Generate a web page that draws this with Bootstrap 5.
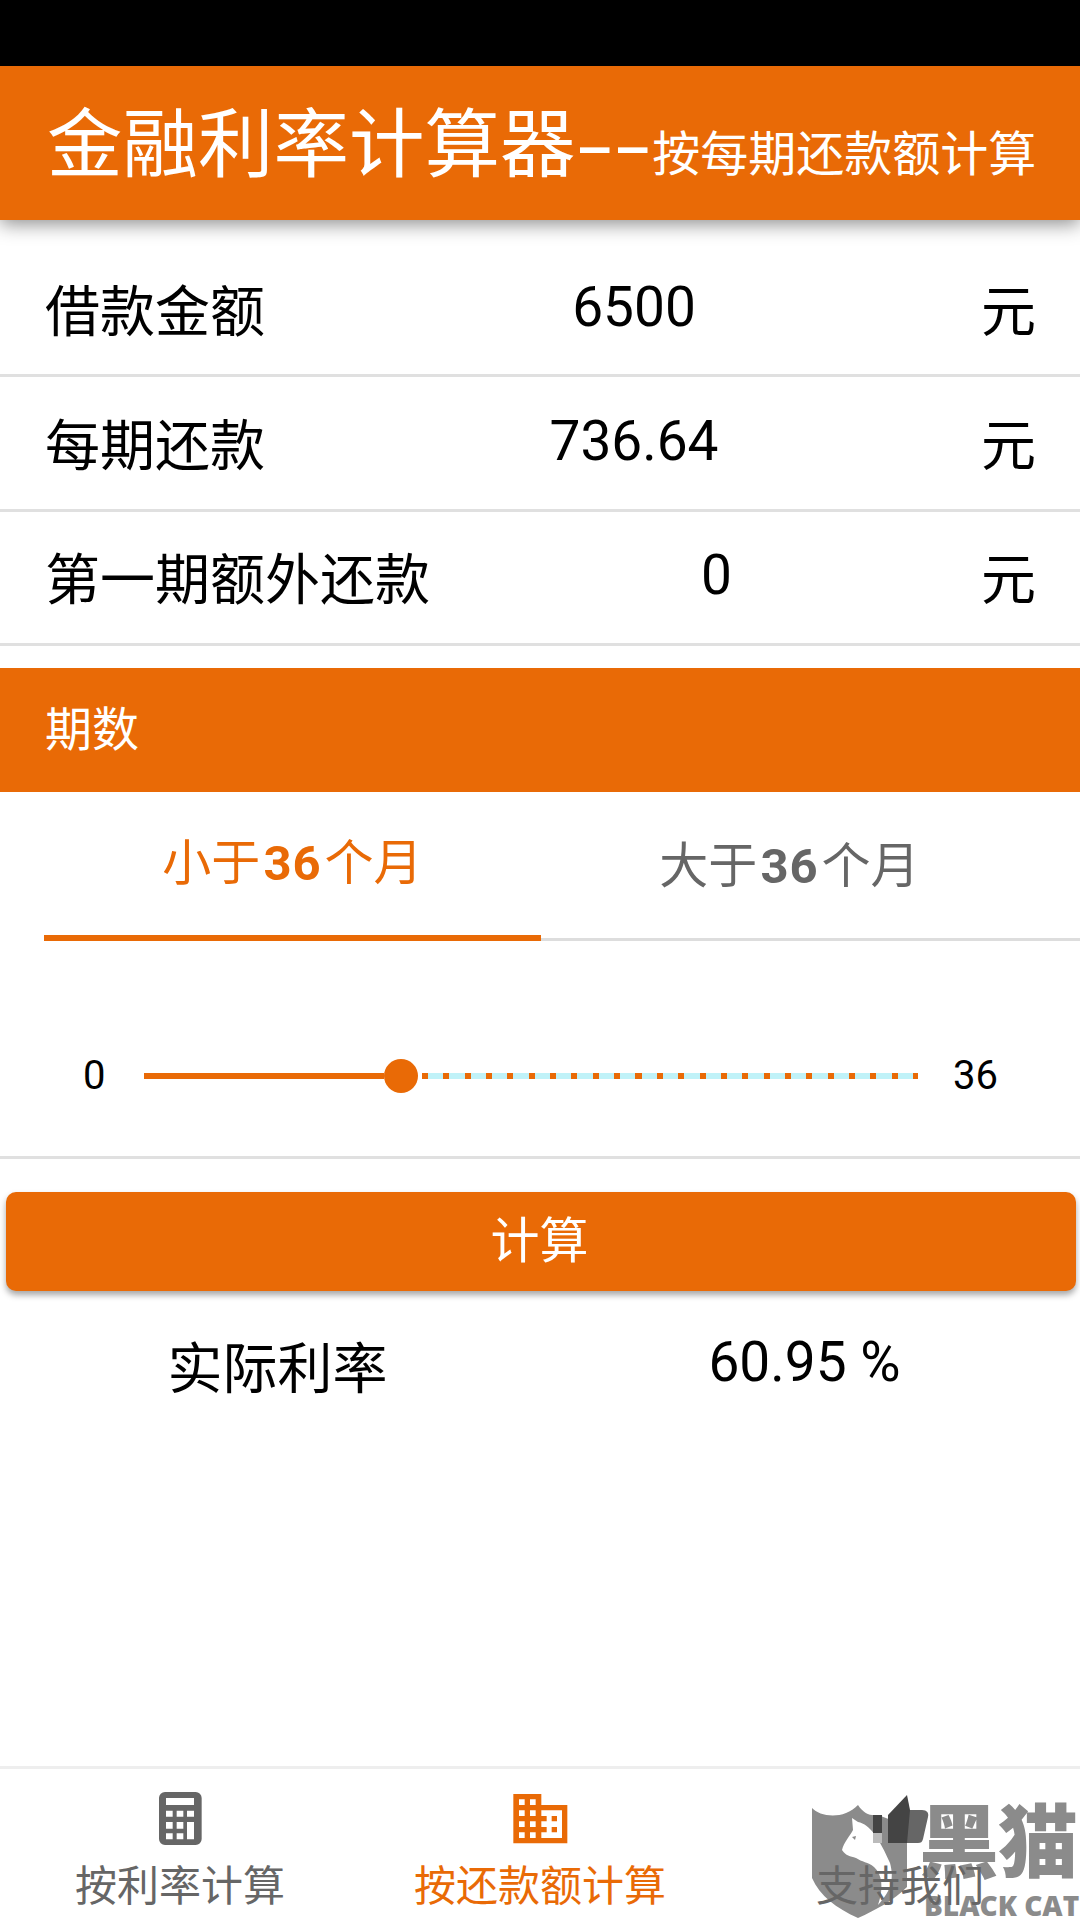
<!DOCTYPE html>
<html lang="zh-CN">
<head>
    <meta charset="UTF-8">
    <meta name="viewport" content="width=device-width, initial-scale=1.0">
    <title>金融利率计算器</title>
    <link rel="stylesheet" href="https://cdn.jsdelivr.net/npm/bootstrap@5.3.0/dist/css/bootstrap.min.css">
    <style>
        body { width: 1080px; height: 1920px; overflow: hidden; font-family: Roboto, "Noto Sans CJK SC", sans-serif; color: #000; background: #fff; }
        .page-wrap { height: 1920px; position: relative; }
        .status-strip { height: 66px; background: #000; }
        .app-head { height: 154px; background: #e96a06; color: #fff; padding: 6px 0 0 47px; box-shadow: 0 4px 18px rgba(0,0,0,.45); position: relative; z-index: 1; }
        .head-big { font-size: 75.5px; line-height: 1; }
        .head-dash { font-size: 59px; line-height: 1; margin: 0 1px 0 0; font-weight: 500; }
        .head-sub { font-size: 48px; line-height: 1; }
        .form-rows { padding-top: 24px; }
        .input-row { height: 134px; border-bottom: 3px solid #e0e0e0; padding: 0 44px 0 45px; font-size: 55px; }
        .input-row:first-child { height: 133px; }
        .input-row:nth-child(2) { height: 135px; }
        .row-label { line-height: 1; position: relative; top: 3px; }
        .row-value { padding-left: 22px; line-height: 1; position: relative; top: -2px; }
        .row-unit { line-height: 1; position: relative; top: 3px; }
        .section-bar { height: 124px; margin-top: 22px; background: #e96a06; color: #fff; padding-left: 45px; font-size: 47px; }
        .tab-strip { height: 149px; margin-left: 44px; border-bottom: 3px solid #ddd; }
        .tab-item { width: 497px; height: 149px; font-size: 49px; color: #666; position: relative; }
        .tab-item.tab-on { color: #e96a06; border-bottom: 6px solid #e96a06; margin-bottom: -3px; height: 149px; }
        .tab-num { font-weight: 700; margin: 0 3px; letter-spacing: 1px; }
        .slider-area { height: 218px; border-bottom: 3px solid #e0e0e0; font-size: 40px; padding-top: 54px; }
        .slider-min { width: 144px; padding-left: 83px; line-height: 1; }
        .slider-max { padding-left: 35px; line-height: 1; }
        .track-done { width: 240px; height: 6px; background: #e96a06; }
        .track-thumb { width: 34px; height: 34px; border-radius: 50%; background: #e96a06; }
        .track-rest { width: 496px; height: 6px; margin-left: 4px; background: repeating-linear-gradient(90deg, #e96a06 0, #e96a06 6px, #c0f2f8 6px, #c0f2f8 21.35px); }
        .calc-btn { display: block; width: 1070px; height: 99px; margin: 33px 0 0 6px; padding: 0 3px 0 0; background: #e96a06; border: 0; border-radius: 10px; color: #fff; font-size: 49px; box-shadow: 0 4px 6px rgba(0,0,0,.35); }
        .calc-btn:hover { background: #e96a06; color: #fff; }
        .result-row { padding: 0 12px 0 14px; margin-top: 37px; font-size: 55px; --bs-gutter-x: 0; }
        .result-value { position: relative; top: -7px; }
        .bottom-nav { position: absolute; left: 0; right: 0; bottom: 0; height: 154px; border-top: 3px solid #eee; padding-top: 11px; }
        .nav-cell { width: 360px; color: #666; font-size: 42px; line-height: 42px; }
        .nav-cell.nav-on { color: #e96a06; }
        .nav-cell svg { display: block; margin-bottom: 6px; }
        .nav-spacer { height: 86px; }
        .black-cat { position: absolute; left: 806px; top: 1790px; width: 274px; height: 130px; color: #8b8b8b; }
        .black-cat svg { position: absolute; left: 0; top: 0; }
        .cat-zh { position: absolute; left: 113px; top: 14px; font-size: 80px; line-height: 1; font-weight: 900; white-space: nowrap; letter-spacing: -1px; }
        .cat-en { position: absolute; left: 118px; top: 101px; font-size: 28px; line-height: 1; font-weight: 800; white-space: nowrap; font-family: "Open Sans", sans-serif; }
    </style>
</head>
<body>
<div class="page-wrap d-flex flex-column">
    <div class="status-strip"></div>

    <div class="app-head d-flex align-items-center">
        <div class="d-flex align-items-baseline">
            <span class="head-big">金融利率计算器</span><span class="head-dash">––</span><span class="head-sub">按每期还款额计算</span>
        </div>
    </div>

    <!-- inputs -->
    <div class="form-rows">
        <div class="input-row d-flex align-items-center">
            <span class="row-label">借款金额</span>
            <span class="row-value flex-grow-1 text-center">6500</span>
            <span class="row-unit">元</span>
        </div>
        <div class="input-row d-flex align-items-center">
            <span class="row-label">每期还款</span>
            <span class="row-value flex-grow-1 text-center">736.64</span>
            <span class="row-unit">元</span>
        </div>
        <div class="input-row d-flex align-items-center">
            <span class="row-label">第一期额外还款</span>
            <span class="row-value flex-grow-1 text-center">0</span>
            <span class="row-unit">元</span>
        </div>
    </div>

    <div class="section-bar d-flex align-items-center">期数</div>

    <div class="tab-strip d-flex">
        <div class="tab-item tab-on d-flex align-items-center justify-content-center"><span>小于<span class="tab-num">36</span>个月</span></div>
        <div class="tab-item d-flex align-items-center justify-content-center"><span>大于<span class="tab-num">36</span>个月</span></div>
    </div>

    <!-- slider -->
    <div class="slider-area d-flex align-items-center">
        <span class="slider-min">0</span>
        <div class="track-done"></div>
        <div class="track-thumb"></div>
        <div class="track-rest"></div>
        <span class="slider-max">36</span>
    </div>

    <button type="button" class="btn calc-btn">计算</button>

    <div class="row result-row">
        <div class="col-6 text-center">实际利率</div>
        <div class="col-6 text-center result-value">60.95 %</div>
    </div>

    <!-- watermark, the tab labels stay readable on top of it -->
    <div class="black-cat">
        <svg width="274" height="130" viewBox="0 0 274 130">
            <path fill="#8b8b8b" d="M6 18C14 27 38 30 52 15 58 24 64 26 72 25L101 36V97C88 110 70 120 52 128 30 118 14 106 6 88z"/>
            <path fill="#fff" d="M46 28L52 32C64 34 74 50 84 73 88 88 86 100 72 115 78 98 76 84 68 77 62 72 56 72 50 68 44 66 40 66 36 60 38 52 44 46 47 40z"/>
            <path fill="#8b8b8b" d="M46 47l4-1-1 4z"/>
            <path fill="#444" d="M67 25h9v18h-9z"/>
            <path fill="#bbb" d="M67 43h9v10h-9z"/>
            <path fill="#666" d="M100 20h16c5 0 7 3 6 7l-5 22c-1 3-2 4-5 4H100z"/>
            <path fill="#444" d="M82 25L101 5l3 15-3 33H82z"/>
        </svg>
        <span class="cat-zh">黑猫</span>
        <span class="cat-en">BLACK CAT</span>
    </div>

    <!-- bottom tabs -->
    <div class="bottom-nav d-flex">
        <div class="nav-cell d-flex flex-column align-items-center">
            <svg width="80" height="80" viewBox="0 0 240 240">
                <path fill="#666" fill-rule="evenodd" d="M75 36h92a18 18 0 0 1 18 18v123a18 18 0 0 1-18 18H75a18 18 0 0 1-18-18V54a18 18 0 0 1 18-18zM78 54v21h84V54zM78 92v18h20V92zM110 92v18h20V92zM141 92v18h21V92zM78 126v20h20v-20zM110 126v20h20v-20zM141 126v52h21v-52zM78 160v18h20v-18zM110 160v18h20v-18z"/>
            </svg>
            <span>按利率计算</span>
        </div>
        <div class="nav-cell nav-on d-flex flex-column align-items-center">
            <svg width="80" height="80" viewBox="0 0 240 240">
                <path fill="#e96a06" fill-rule="evenodd" d="M40 42h84v33h78v115H40zM57 58v17h17V58zM90 58v17h17V58zM57 91v17h17V91zM90 91v17h17V91zM57 124v17h17v-17zM90 124v17h17v-17zM57 157v17h17v-17zM90 157v17h17v-17zM124 91v17h16v16h-16v17h16v16h-16v17h62V91zM155 108h16v16h-16zM155 141h16v16h-16z"/>
            </svg>
            <span>按还款额计算</span>
        </div>
        <div class="nav-cell d-flex flex-column align-items-center">
            <div class="nav-spacer"></div>
            <span>支持我们</span>
        </div>
    </div>
</div>
<script src="https://cdn.jsdelivr.net/npm/bootstrap@5.3.0/dist/js/bootstrap.bundle.min.js"></script>
</body>
</html>
